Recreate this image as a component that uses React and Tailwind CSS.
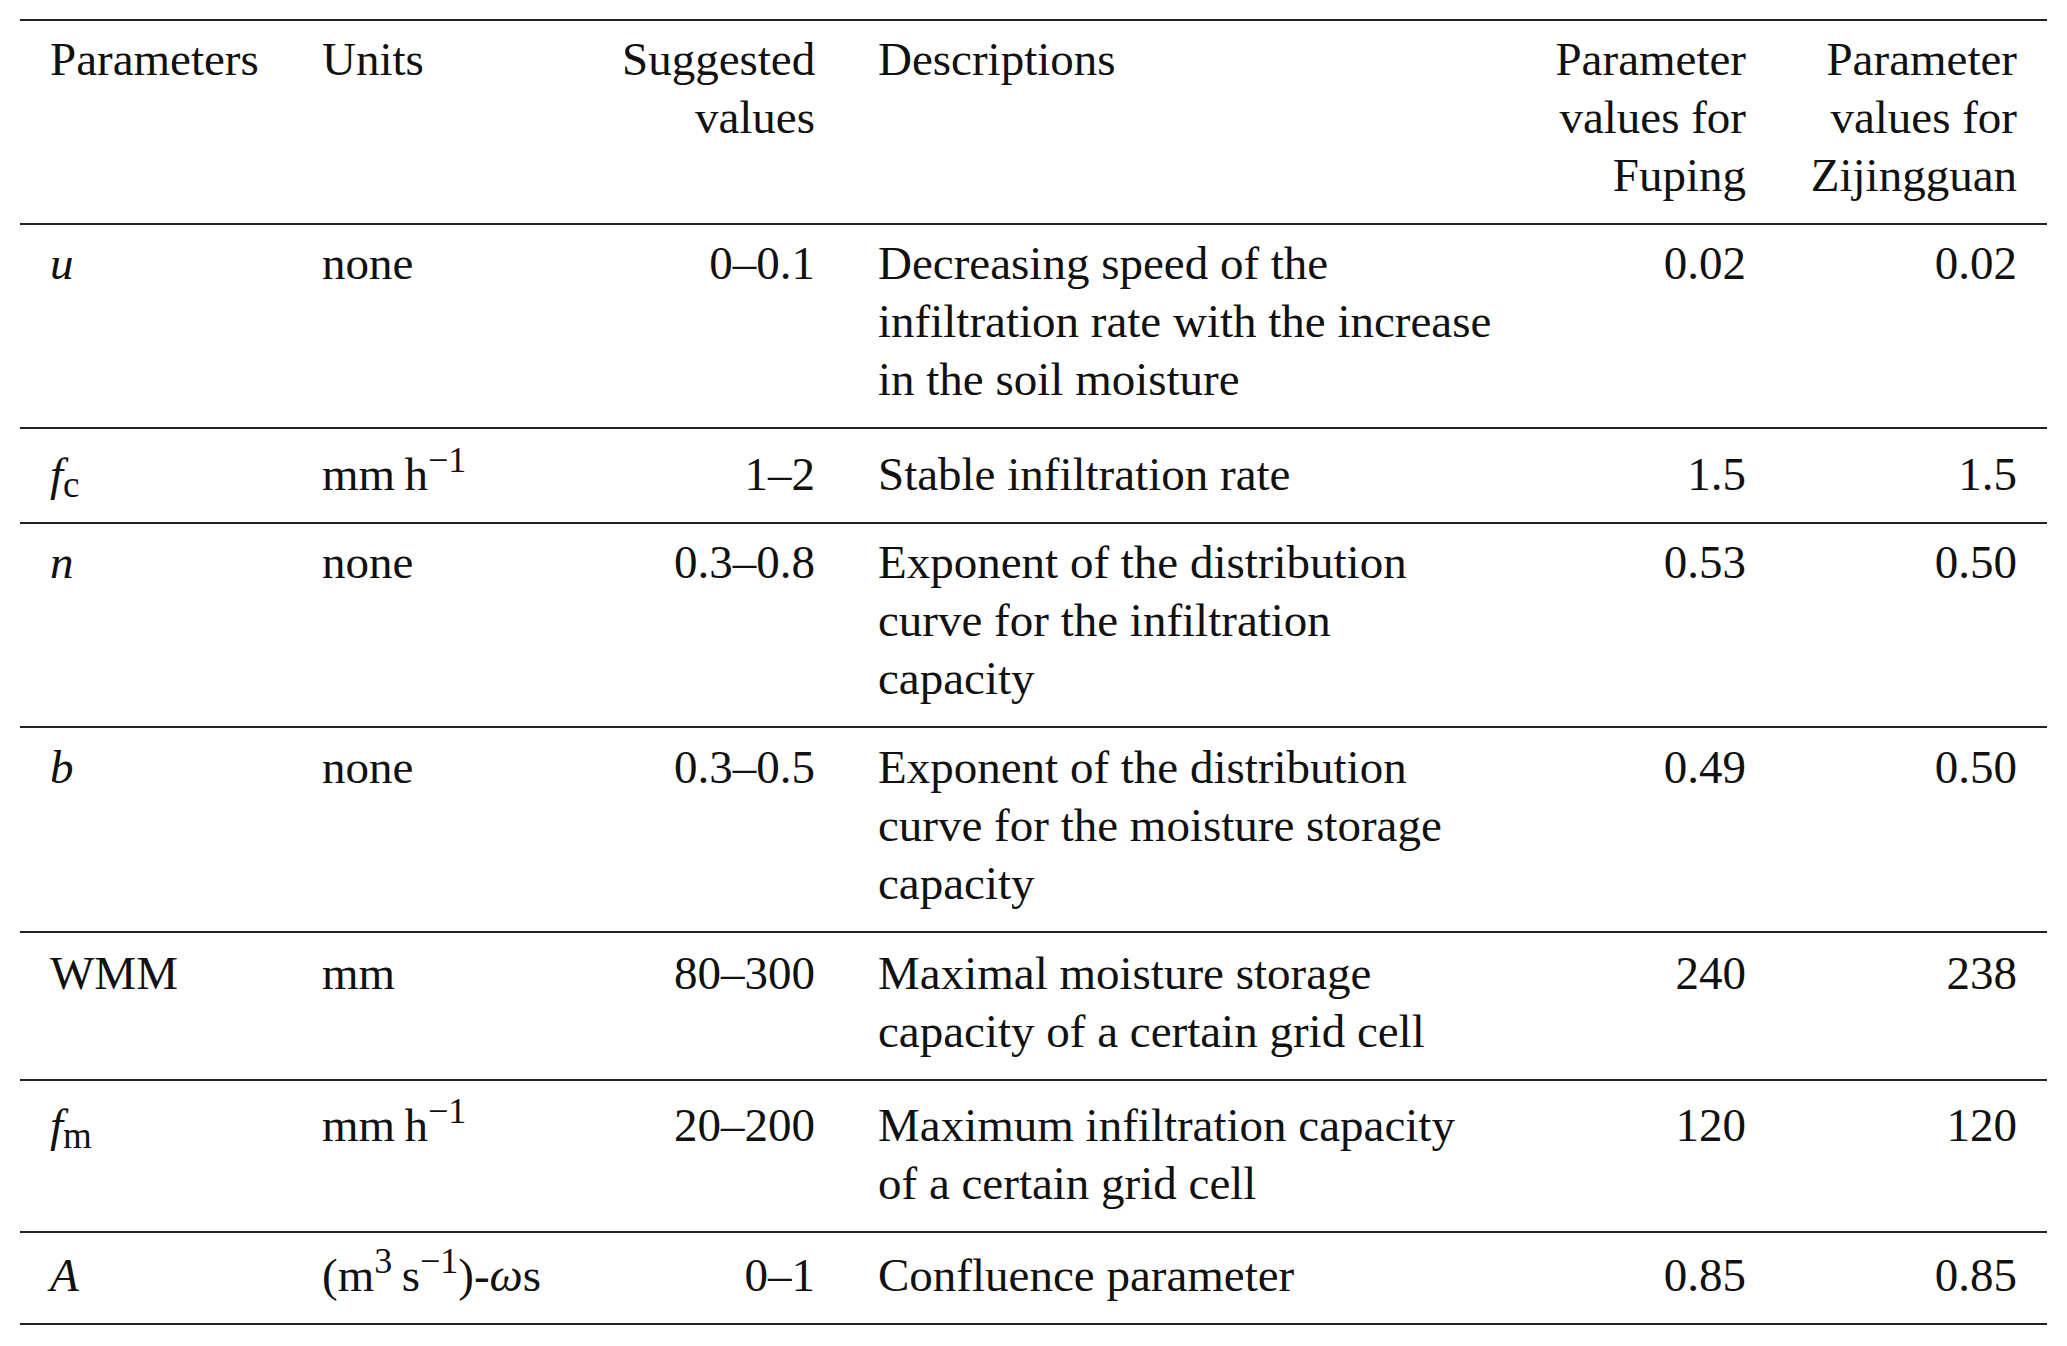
import React from "react";

const cols = "grid grid-cols-[272px_300px_253px_651px_280px_271px]";

function Sup({ children }) {
  return <span className="relative -top-[18px] text-[36px] leading-none">{children}</span>;
}

function Sub({ children }) {
  return <span className="relative top-[7px] text-[37px] leading-none not-italic">{children}</span>;
}

const rows = [
  {
    p: <i>u</i>,
    unit: "none",
    sug: "0–0.1",
    desc: ["Decreasing speed of the", "infiltration rate with the increase", "in the soil moisture"],
    fu: "0.02",
    zi: "0.02",
    pt: "pt-[9px]",
  },
  {
    p: (
      <>
        <i>f</i>
        <Sub>c</Sub>
      </>
    ),
    unit: (
      <>
        mm&#8201;h<Sup>−1</Sup>
      </>
    ),
    sug: "1–2",
    desc: ["Stable infiltration rate"],
    fu: "1.5",
    zi: "1.5",
    pt: "pt-[16px]",
  },
  {
    p: <i>n</i>,
    unit: "none",
    sug: "0.3–0.8",
    desc: ["Exponent of the distribution", "curve for the infiltration", "capacity"],
    fu: "0.53",
    zi: "0.50",
    pt: "pt-[9px]",
  },
  {
    p: <i>b</i>,
    unit: "none",
    sug: "0.3–0.5",
    desc: ["Exponent of the distribution", "curve for the moisture storage", "capacity"],
    fu: "0.49",
    zi: "0.50",
    pt: "pt-[10px]",
  },
  {
    p: "WMM",
    unit: "mm",
    sug: "80–300",
    desc: ["Maximal moisture storage", "capacity of a certain grid cell"],
    fu: "240",
    zi: "238",
    pt: "pt-[11px]",
  },
  {
    p: (
      <>
        <i>f</i>
        <Sub>m</Sub>
      </>
    ),
    unit: (
      <>
        mm&#8201;h<Sup>−1</Sup>
      </>
    ),
    sug: "20–200",
    desc: ["Maximum infiltration capacity", "of a certain grid cell"],
    fu: "120",
    zi: "120",
    pt: "pt-[15px]",
  },
  {
    p: <i>A</i>,
    unit: (
      <>
        (m<Sup>3</Sup>&#8201;s<Sup>−1</Sup>)-<i>ω</i>s
      </>
    ),
    sug: "0–1",
    desc: ["Confluence parameter"],
    fu: "0.85",
    zi: "0.85",
    pt: "pt-[13px]",
  },
];

function Lines({ items }) {
  return items.map((t, i) => (
    <div key={i} className="whitespace-nowrap">
      {t}
    </div>
  ));
}

export default function App() {
  return (
    <div className="w-[2067px] h-[1346px] bg-white pt-[19px] px-[20px] text-[#111] font-['Liberation_Serif',serif] text-[47px] leading-[58px]">
      <div className={`${cols} border-t-2 border-[#222] pt-[9px] pb-[19px]`}>
        <div className="px-[30px]">Parameters</div>
        <div className="px-[30px]">Units</div>
        <div className="px-[30px] text-right">
          <Lines items={["Suggested", "values"]} />
        </div>
        <div className="pl-[33px] pr-[30px]">Descriptions</div>
        <div className="px-[30px] text-right">
          <Lines items={["Parameter", "values for", "Fuping"]} />
        </div>
        <div className="px-[30px] text-right">
          <Lines items={["Parameter", "values for", "Zijingguan"]} />
        </div>
      </div>
      {rows.map((r, i) => (
        <div
          key={i}
          className={`${cols} border-t-2 border-[#222] ${r.pt} pb-[19px] ${i === rows.length - 1 ? "border-b-2" : ""}`}
        >
          <div className="px-[30px] whitespace-nowrap">{r.p}</div>
          <div className="px-[30px] whitespace-nowrap">{r.unit}</div>
          <div className="px-[30px] text-right whitespace-nowrap">{r.sug}</div>
          <div className="pl-[33px] pr-[30px]">
            <Lines items={r.desc} />
          </div>
          <div className="px-[30px] text-right">{r.fu}</div>
          <div className="px-[30px] text-right">{r.zi}</div>
        </div>
      ))}
    </div>
  );
}
